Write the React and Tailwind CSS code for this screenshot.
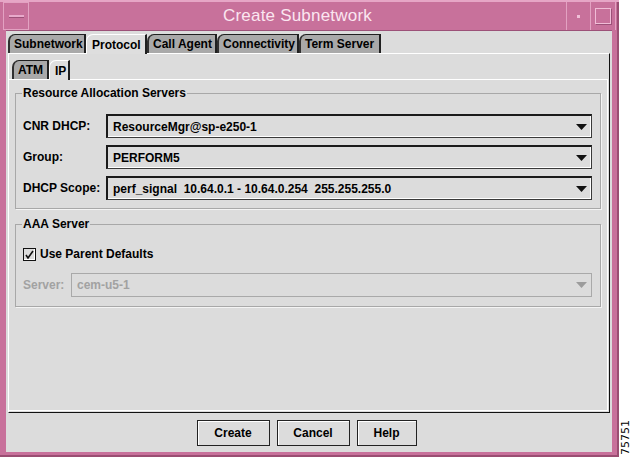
import { useState } from "react";

const font = "font-['Liberation_Sans','Arial',sans-serif]";

function Tab({ label, width, selected }) {
  if (selected) {
    return (
      <div
        className={`${width} h-[20px] -mb-[1px] relative z-10 bg-[#dedede] border-l border-t border-white border-r-2 border-r-[#202020] rounded-tl-[7px] flex items-center pl-[5px] text-[12px] font-bold text-black`}
      >
        {label}
      </div>
    );
  }
  return (
    <div
      className={`${width} h-[19px] mt-[1px] bg-[#a9a9a9] border-l-2 border-t border-r-2 border-[#202020] border-l-[#303030] rounded-tl-[7px] flex items-center pl-[4px] text-[12px] font-bold text-black`}
    >
      {label}
    </div>
  );
}

function Arrow({ disabled }) {
  return (
    <svg width="11" height="6" viewBox="0 0 11 6" className="mr-[4px]">
      <polygon points="0,0 11,0 5.5,6" fill={disabled ? "#9c9c9c" : "#111"} />
    </svg>
  );
}

function Combo({ value, disabled }) {
  return (
    <div
      className={
        disabled
          ? "flex-1 h-[24px] flex items-center justify-between border border-[#a9a9a9] bg-[#dcdcdc]"
          : "flex-1 h-[24px] flex items-center justify-between border-l-2 border-t-2 border-[#1a1a1a] border-r border-b border-r-[#3a3a3a] border-b-[#3a3a3a] bg-[#dcdcdc] shadow-[inset_-1px_-1px_0_#fff]"
      }
    >
      <span
        className={`pl-[5px] text-[12px] font-bold whitespace-pre ${disabled ? "text-[#a2a2a2]" : "text-black"}`}
      >
        {value}
      </span>
      <Arrow disabled={disabled} />
    </div>
  );
}

function Row({ label, value, labelWidth = "w-[83px]", disabled }) {
  return (
    <div className="flex items-center">
      <div
        className={`${labelWidth} text-[12px] font-bold ${disabled ? "text-[#a2a2a2]" : "text-black"}`}
      >
        {label}
      </div>
      <Combo value={value} disabled={disabled} />
    </div>
  );
}

function Group({ title, children, className }) {
  return (
    <div
      className={`relative border border-[#a8a8a8] shadow-[1px_1px_0_#f4f4f4] ${className}`}
    >
      <div className="absolute -top-[9px] left-[6px] px-[1px] bg-[#dcdcdc] text-[12px] font-bold text-black leading-[16px]">
        {title}
      </div>
      {children}
    </div>
  );
}

function Button({ label, width }) {
  return (
    <div
      className={`${width} h-[26px] flex items-center justify-center border border-[#222] shadow-[inset_1px_1px_0_#fff] bg-[#dcdcdc] text-[12px] font-bold text-black`}
    >
      {label}
    </div>
  );
}

export default function App() {
  const [checked] = useState(true);

  return (
    <div className={`w-[633px] h-[457px] flex bg-white ${font}`}>
      {/* window frame */}
      <div className="w-[619px] h-[457px] bg-[#c8719b] flex flex-col pl-[6px] pr-[7px] pb-[5px] border-t-2 border-[#e6a6c6] shadow-[inset_-2px_-2px_0_#9a4e72]">
        {/* title bar */}
        <div className="h-[28px] -ml-[3px] -mr-[4px] flex items-stretch">
          <div className="w-[26px] border border-[#e3a2c2] flex items-center justify-center">
            <div className="w-[15px] h-[3px] bg-[#e8aacb] border-b border-[#9c5178]" />
          </div>
          <div className="flex-1 flex items-center justify-center text-[17px] text-[#fbe6f0] tracking-[0.2px]">
            Create Subnetwork
          </div>
          <div className="w-[24px] border-l border-[#e3a2c2] flex items-center justify-center">
            <div className="w-[3px] h-[3px] bg-[#f0c0d8]" />
          </div>
          <div className="w-[26px] border-l border-r border-[#e3a2c2] flex items-center justify-center">
            <div className="w-[16px] h-[16px] border border-[#f0bcd6] shadow-[1px_1px_0_#9c5178]" />
          </div>
        </div>

        {/* body */}
        <div className="flex-1 bg-[#dcdcdc] flex flex-col border-t border-[#9c5178]">
          {/* main tabs */}
          <div className="flex pl-[2px] pt-[2px] h-[22px] items-end">
            <Tab label="Subnetwork" width="w-[78px]" />
            <Tab label="Protocol" width="w-[61px]" selected />
            <Tab label="Call Agent" width="w-[70px]" />
            <Tab label="Connectivity" width="w-[82px]" />
            <Tab label="Term Server" width="w-[82px]" />
          </div>

          {/* tab panel */}
          <div className="mx-[2px] h-[360px] border-t border-l border-white border-r border-b border-r-[#111] border-b-[#111] flex flex-col">
            <div className="flex pl-[3px] pt-[7px] h-[25px] items-end">
              <Tab label="ATM" width="w-[37px]" />
              <Tab label="IP" width="w-[21px]" selected />
            </div>

            <div className="flex-1 mr-[1px] mb-[1px] border-t border-white border-r border-b border-[#111] border-t-white pt-[13px] px-[6px]">
              <Group title="Resource Allocation Servers" className="pt-[20px] pb-[8px] pl-[7px] pr-[8px] flex flex-col gap-[7px]">
                <Row label="CNR DHCP:" value="ResourceMgr@sp-e250-1" />
                <Row label="Group:" value="PERFORM5" />
                <Row
                  label="DHCP Scope:"
                  value="perf_signal  10.64.0.1 - 10.64.0.254  255.255.255.0"
                />
              </Group>

              <Group title="AAA Server" className="mt-[15px] pt-[21px] pb-[9px] pl-[7px] pr-[8px] flex flex-col gap-[11px]">
                <div className="flex items-center h-[16px]">
                  <div className="w-[13px] h-[13px] border border-[#111] shadow-[inset_-1px_-1px_0_#fff] bg-[#dcdcdc] flex items-center justify-center">
                    {checked && (
                      <svg width="9" height="9" viewBox="0 0 9 9">
                        <path d="M1 5 L3 8 L8 1" fill="none" stroke="#111" strokeWidth="1.6" />
                      </svg>
                    )}
                  </div>
                  <span className="ml-[4px] text-[12px] font-bold text-black">
                    Use Parent Defaults
                  </span>
                </div>
                <Row label="Server:" value="cem-u5-1" labelWidth="w-[48px]" disabled />
              </Group>
            </div>
          </div>

          {/* buttons */}
          <div className="flex-1 flex items-center justify-center gap-[7px] pr-[5px]">
            <Button label="Create" width="w-[73px]" />
            <Button label="Cancel" width="w-[73px]" />
            <Button label="Help" width="w-[60px]" />
          </div>
        </div>
      </div>

      {/* figure number strip */}
      <div className="flex-1 flex items-end justify-center pb-[2px]">
        <div className="[writing-mode:vertical-rl] rotate-180 text-[11px] text-black leading-[12px] font-['DejaVu_Sans',sans-serif]">
          75751
        </div>
      </div>
    </div>
  );
}
